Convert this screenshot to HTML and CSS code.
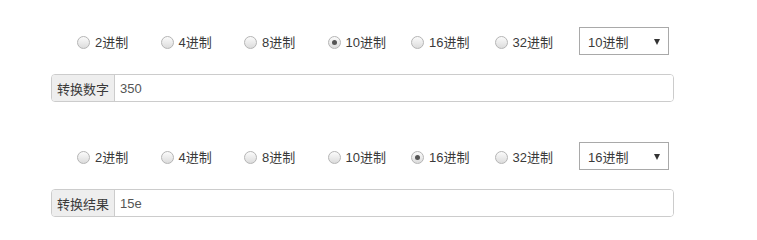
FILE: index.html
```html
<!DOCTYPE html>
<html lang="zh">
<head>
<meta charset="utf-8">
<title>进制转换</title>
<link rel="stylesheet" href="styles.css">
</head>
<body>
<div class="panel">
  <section class="block">
    <div class="row">
      <div class="opts">
        <label class="opt"><span class="radio"></span>2进制</label>
        <label class="opt"><span class="radio"></span>4进制</label>
        <label class="opt"><span class="radio"></span>8进制</label>
        <label class="opt"><span class="radio checked"></span>10进制</label>
        <label class="opt"><span class="radio"></span>16进制</label>
        <label class="opt"><span class="radio"></span>32进制</label>
      </div>
      <div class="select"><span class="select-text">10进制</span><span class="arrow"></span></div>
    </div>
    <div class="input-group">
      <span class="addon">转换数字</span>
      <span class="field">350</span>
    </div>
  </section>
  <section class="block second">
    <div class="row">
      <div class="opts">
        <label class="opt"><span class="radio"></span>2进制</label>
        <label class="opt"><span class="radio"></span>4进制</label>
        <label class="opt"><span class="radio"></span>8进制</label>
        <label class="opt"><span class="radio"></span>10进制</label>
        <label class="opt"><span class="radio checked"></span>16进制</label>
        <label class="opt"><span class="radio"></span>32进制</label>
      </div>
      <div class="select"><span class="select-text">16进制</span><span class="arrow"></span></div>
    </div>
    <div class="input-group">
      <span class="addon">转换结果</span>
      <span class="field">15e</span>
    </div>
  </section>
</div>
</body>
</html>
```
FILE: styles.css
```css
html, body {
  margin: 0;
  padding: 0;
  background: #fff;
}
body {
  font-family: "Liberation Sans", "Noto Sans CJK SC", sans-serif;
  font-size: 13px;
  color: #3a3a3a;
}
.panel {
  width: 623px;
  margin-left: 51px;
  padding-top: 27px;
}
.block.second {
  margin-top: 40px;
}
.row {
  display: flex;
  height: 28px;
  padding-left: 26px;
}
.opts {
  display: flex;
  padding-top: 3px;
}
.opt {
  width: 83.5px;
  display: flex;
  align-items: center;
  gap: 5px;
  line-height: 16px;
}
.radio {
  width: 11px;
  height: 11px;
  border: 1px solid #b5b5b5;
  border-radius: 50%;
  background: linear-gradient(#fbfbfb, #dcdcdc);
  display: flex;
  align-items: center;
  justify-content: center;
  flex: none;
}
.radio.checked::after {
  content: "";
  width: 5px;
  height: 5px;
  border-radius: 50%;
  background: #555;
}
.select {
  position: relative;
  margin-left: 1px;
  width: 80px;
  height: 26px;
  border: 1px solid #a9a9a9;
  display: flex;
  align-items: center;
  padding-left: 8px;
}
.arrow {
  position: absolute;
  right: 8px;
  top: 11px;
  width: 0;
  height: 0;
  border-left: 3.5px solid transparent;
  border-right: 3.5px solid transparent;
  border-top: 6px solid #333;
}
.input-group {
  margin-top: 19px;
  display: flex;
  height: 28px;
  box-sizing: border-box;
  border: 1px solid #ccc;
  border-radius: 4px;
  overflow: hidden;
}
.addon {
  background: #eee;
  border-right: 1px solid #ccc;
  padding: 0 5px;
  display: flex;
  align-items: center;
  color: #3a3a3a;
}
.field {
  flex: 1;
  display: flex;
  align-items: center;
  padding-left: 5px;
  color: #555;
  background: #fff;
}
```
